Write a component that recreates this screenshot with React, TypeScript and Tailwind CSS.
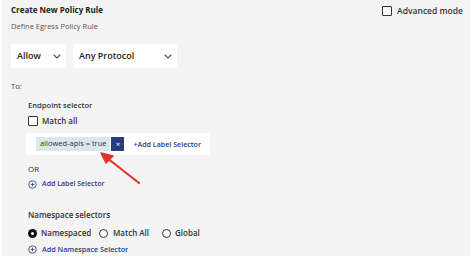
import React from "react";

const font = { fontFamily: '"Open Sans", "Noto Sans", sans-serif' };

function Chevron() {
  return (
    <svg width="8" height="5" viewBox="0 0 8 5" className="text-[#555]">
      <path d="M1 1l3 3 3-3" fill="none" stroke="currentColor" strokeWidth="1.1" strokeLinecap="round" strokeLinejoin="round" />
    </svg>
  );
}

function PlusCircle() {
  return (
    <svg width="9" height="9" viewBox="0 0 10 10" className="text-[#2b3a80] shrink-0">
      <circle cx="5" cy="5" r="4.2" fill="none" stroke="currentColor" strokeWidth="0.9" />
      <path d="M5 3v4M3 5h4" stroke="currentColor" strokeWidth="0.9" />
    </svg>
  );
}

function Radio({ on }: { on?: boolean }) {
  return on ? (
    <span className="w-[9px] h-[9px] rounded-full bg-[#111] flex items-center justify-center shrink-0">
      <span className="w-[3px] h-[3px] rounded-full bg-white" />
    </span>
  ) : (
    <span className="block w-[9px] h-[9px] rounded-full border border-[#333] bg-white shrink-0" />
  );
}

export default function App() {
  return (
    <div className="w-[474px] h-[260px] bg-white" style={font}>
      <div className="ml-[2px] w-[468px] h-[256px] bg-[#f4f4f4] relative text-[#222]">
        <div className="flex justify-between items-start pl-[9px] pr-[7px] pt-[3px]">
          <div className="text-[8px] font-bold leading-[14px]">Create New Policy Rule</div>
          <div className="flex items-center gap-[5px] pt-[2px]">
            <span className="block w-[10px] h-[10px] border border-[#333] rounded-[1px] bg-white" />
            <span className="text-[8.5px] font-semibold text-[#333] leading-[12px]">Advanced mode</span>
          </div>
        </div>
        <div className="pl-[9px] mt-[4px] text-[7.5px] text-[#555] leading-[10px]">Define Egress Policy Rule</div>
        <div className="flex gap-[7px] pl-[9px] mt-[13px]">
          <div className="w-[55px] h-[24px] bg-white rounded-[2px] flex items-center justify-between pl-[6px] pr-[5px]">
            <span className="text-[9px] font-semibold">Allow</span>
            <Chevron />
          </div>
          <div className="w-[104px] h-[24px] bg-white rounded-[2px] flex items-center justify-between pl-[6px] pr-[5px]">
            <span className="text-[9px] font-semibold">Any Protocol</span>
            <Chevron />
          </div>
        </div>
        <div className="pl-[9px] mt-[13px] text-[7.5px] text-[#444] leading-[10px]">To:</div>
        <div className="pl-[24px] pr-[2px]">
          <div className="pl-[2px] mt-[8px] text-[7.6px] font-semibold text-[#333] leading-[12px]">Endpoint selector</div>
          <div className="pl-[2px] mt-[4px] flex items-center gap-[4px]">
            <span className="block w-[10px] h-[10px] border border-[#333] rounded-[1px] bg-white" />
            <span className="text-[8px] font-semibold text-[#333] leading-[12px]">Match all</span>
          </div>
          <div className="mt-[6px] w-[184px] h-[22px] bg-white rounded-[2px] flex items-center pl-[10px]">
            <span className="h-[14px] bg-[#dce6ef] flex items-center px-[4px] text-[7.5px] text-[#333]">allowed-apis = true</span>
            <span className="ml-[1px] w-[13px] h-[14px] bg-[#2a3a7e] text-white flex items-center justify-center text-[8px]">×</span>
            <span className="ml-[9px] text-[7.1px] text-[#2b3a80] font-semibold">+Add Label Selector</span>
          </div>
          <div className="pl-[2px] mt-[9px] text-[8px] text-[#333] leading-[10px]">OR</div>
          <div className="pl-[2px] mt-[5px] flex items-center gap-[5px]">
            <PlusCircle />
            <span className="text-[7px] font-semibold text-[#2b3a80] leading-[10px]">Add Label Selector</span>
          </div>
          <div className="pl-[2px] mt-[20px] text-[8px] font-semibold text-[#333] leading-[12px]">Namespace selectors</div>
          <div className="pl-[2px] mt-[6px] flex items-center text-[8px] font-semibold text-[#333] leading-[12px]">
            <Radio on />
            <span className="ml-[4px] w-[58px]">Namespaced</span>
            <Radio />
            <span className="ml-[5px] w-[49px]">Match All</span>
            <Radio />
            <span className="ml-[4px]">Global</span>
          </div>
          <div className="pl-[2px] mt-[5px] flex items-center gap-[5px]">
            <PlusCircle />
            <span className="text-[7.2px] font-semibold text-[#2b3a80] leading-[10px]">Add Namespace Selector</span>
          </div>
        </div>
        <svg className="absolute left-0 top-0" width="474" height="260" style={{ pointerEvents: "none" }}>
          <line x1="137" y1="183" x2="105" y2="158" stroke="#e1342b" strokeWidth="2.2" strokeLinecap="round" />
          <path d="M99 153 L111 156 L104 163 Z" fill="#e1342b" stroke="#e1342b" strokeWidth="1.5" strokeLinejoin="round" />
        </svg>
      </div>
    </div>
  );
}
